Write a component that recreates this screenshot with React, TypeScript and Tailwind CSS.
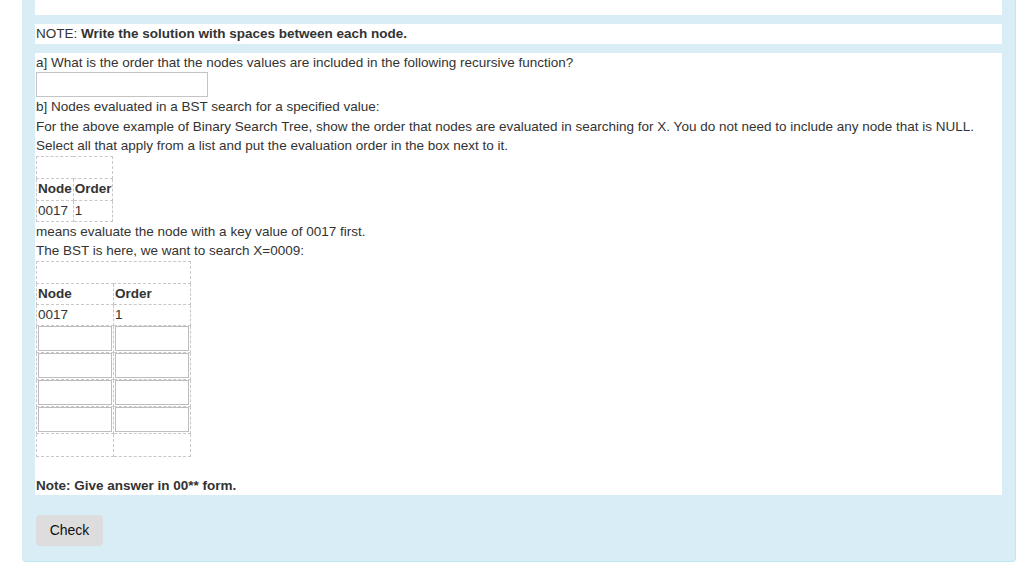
import React from 'react';

const cell = 'border border-dashed border-[#c8c8c8] p-0 align-middle';

export default function App() {
  const inputRows = [0, 1, 2, 3];

  return (
    <div className="w-[1024px] h-[586px] bg-white text-[13.5px] leading-[19.5px] text-[#333]" style={{ fontFamily: '"Liberation Sans", Arial, sans-serif' }}>
      <div className="ml-[22px] w-[994px] h-[562px] bg-[#d9edf7] border-r border-b border-[#bce8f1] rounded-b-[4px] pl-[13px] pr-[13px]">
        {/* top block (cut off) */}
        <div className="h-[15px] bg-white" />

        {/* note */}
        <div className="mt-[9px] h-[20px] bg-white px-[1px] leading-[20px]">
          NOTE: <b>Write the solution with spaces between each node.</b>
        </div>

        {/* question */}
        <div className="mt-[9px] h-[442px] bg-white px-[1px]">
          <div className="leading-[19px]">a] What is the order that the nodes values are included in the following recursive function?</div>
          <input type="text" className="block w-[172px] h-[25px] border border-[#c4c4c4] bg-white outline-none" />
          <div className="leading-[19.5px]">b] Nodes evaluated in a BST search for a specified value:</div>
          <div>For the above example of Binary Search Tree, show the order that nodes are evaluated in searching for X. You do not need to include any node that is NULL.</div>
          <div>Select all that apply from a list and put the evaluation order in the box next to it.</div>

          <table className="border-collapse">
            <tbody>
              <tr className="h-[22px]">
                <td colSpan={2} className={cell} />
              </tr>
              <tr className="h-[22px]">
                <td className={`${cell} font-bold px-[1px]`}>Node</td>
                <td className={`${cell} font-bold pl-[1px]`}>Order</td>
              </tr>
              <tr className="h-[21px]">
                <td className={`${cell} px-[1px]`}>0017</td>
                <td className={`${cell} pl-[1px]`}>1</td>
              </tr>
            </tbody>
          </table>

          <div>means evaluate the node with a key value of 0017 first.</div>
          <div>The BST is here, we want to search X=0009:</div>

          <table className="border-collapse">
            <tbody>
              <tr className="h-[22px]">
                <td colSpan={2} className={cell} />
              </tr>
              <tr className="h-[21px]">
                <td className={`${cell} w-[76px] font-bold px-[1px]`}>Node</td>
                <td className={`${cell} w-[76px] font-bold px-[1px]`}>Order</td>
              </tr>
              <tr className="h-[21px]">
                <td className={`${cell} px-[1px]`}>0017</td>
                <td className={`${cell} px-[1px]`}>1</td>
              </tr>
              {inputRows.map((r) => (
                <tr key={r} className="h-[27px]">
                  <td className={`${cell} px-[1px]`}>
                    <input type="text" className="block w-[74px] h-[25px] border border-[#bdbdbd] bg-white outline-none" />
                  </td>
                  <td className={`${cell} px-[1px]`}>
                    <input type="text" className="block w-[74px] h-[25px] border border-[#bdbdbd] bg-white outline-none" />
                  </td>
                </tr>
              ))}
              <tr className="h-[23px]">
                <td className={cell} />
                <td className={cell} />
              </tr>
            </tbody>
          </table>

          <div className="mt-[19px] font-bold">Note: Give answer in 00** form.</div>
        </div>

        {/* check button */}
        <button className="mt-[20px] ml-[1px] w-[67px] h-[31px] pt-[1px] bg-[#dddddd] rounded-[4px] text-[14px] text-[#111]">
          Check
        </button>
      </div>
    </div>
  );
}
